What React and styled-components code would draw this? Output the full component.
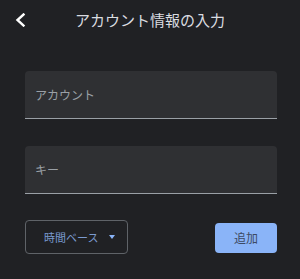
import React from "react";
import styled, { createGlobalStyle } from "styled-components";

const Global = createGlobalStyle`
  html, body { margin: 0; padding: 0; background: #202124; }
  body { font-family: "Noto Sans CJK JP", Roboto, sans-serif; }
  * { box-sizing: border-box; }
`;

const Page = styled.div`
  width: 300px;
  height: 279px;
  background: #202124;
  display: flex;
  flex-direction: column;
`;

const Header = styled.header`
  height: 40px;
  display: grid;
  grid-template-columns: 40px 1fr 40px;
  align-items: center;
`;

const BackButton = styled.button`
  background: none;
  border: none;
  padding: 0 0 0 15px;
  margin: 0;
  height: 40px;
  display: flex;
  align-items: center;
  cursor: pointer;
`;

const Title = styled.h1`
  margin: 0;
  font-size: 15px;
  font-weight: 400;
  color: #dadce0;
  text-align: center;
  line-height: 40px;
  letter-spacing: 0;
`;

const Body = styled.div`
  padding: 31px 23px 0 25px;
  display: flex;
  flex-direction: column;
`;

const Field = styled.input`
  display: block;
  width: 100%;
  height: 48px;
  margin-bottom: ${(p) => p.$gap || 0}px;
  padding: 0 10px;
  border: none;
  border-bottom: 1px solid #9aa0a6;
  border-radius: 4px 4px 0 0;
  background: #2f3033;
  color: #e8eaed;
  font-family: "Noto Sans CJK JP", Roboto, sans-serif;
  font-size: 12px;
  outline: none;
  &::placeholder { color: #9aa0a6; }
`;

const Actions = styled.div`
  display: flex;
  justify-content: space-between;
  align-items: center;
  margin-top: 26px;
`;

const OutlinedButton = styled.button`
  width: 103px;
  height: 34px;
  border: 1px solid #5f6368;
  border-radius: 4px;
  background: transparent;
  color: #7b9bd0;
  font-family: "Noto Sans CJK JP", Roboto, sans-serif;
  font-size: 11px;
  display: flex;
  align-items: center;
  padding: 0 0 0 18px;
  gap: 11px;
`;

const Caret = styled.span`
  width: 0;
  height: 0;
  border-left: 3px solid transparent;
  border-right: 3px solid transparent;
  border-top: 4px solid #8ab4f8;
`;

const FilledButton = styled.button`
  width: 62px;
  height: 30px;
  border: none;
  border-radius: 4px;
  background: #8ab4f8;
  color: #3d4a63;
  font-family: "Noto Sans CJK JP", Roboto, sans-serif;
  font-size: 12px;
  padding: 0;
  margin-top: 1px;
`;

export default function App() {
  return (
    <Page>
      <Global />
      <Header>
        <BackButton aria-label="戻る">
          <svg width="11" height="14" viewBox="0 0 11 14">
            <polyline
              points="8.5,1.5 2.5,7 8.5,12.5"
              fill="none"
              stroke="#ffffff"
              strokeWidth="2.4"
              strokeLinecap="square"
            />
          </svg>
        </BackButton>
        <Title>アカウント情報の入力</Title>
        <span />
      </Header>
      <Body>
        <Field placeholder="アカウント" $gap={27} />
        <Field placeholder="キー" />
        <Actions>
          <OutlinedButton>
            時間ベース
            <Caret />
          </OutlinedButton>
          <FilledButton>追加</FilledButton>
        </Actions>
      </Body>
    </Page>
  );
}
